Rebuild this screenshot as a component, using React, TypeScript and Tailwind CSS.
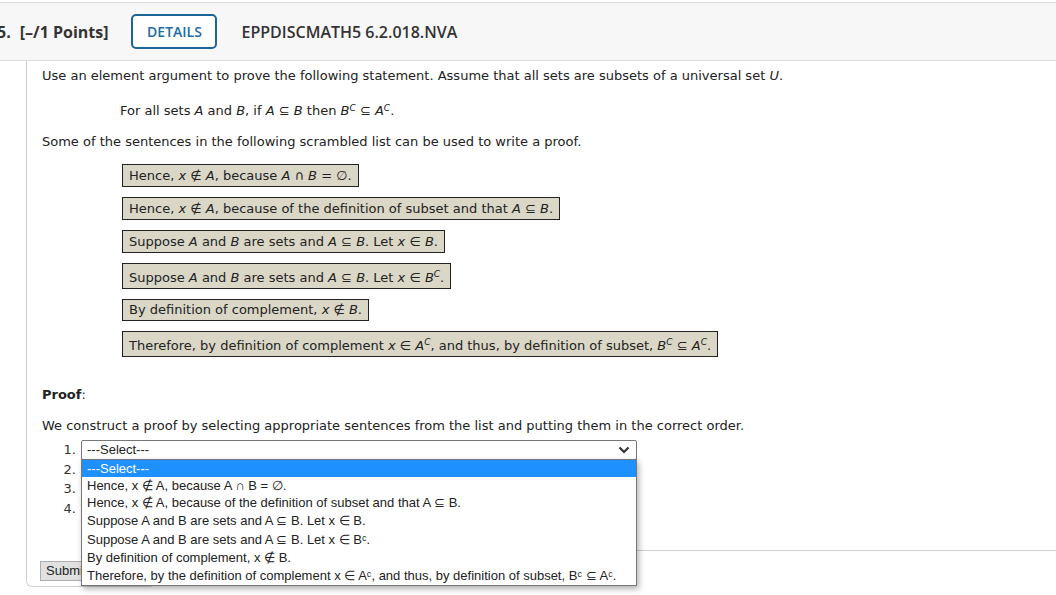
import React from "react";

const body = { fontFamily: '"DejaVu Sans", Verdana, sans-serif' } as const;
const arial = { fontFamily: '"Liberation Sans", Arial, sans-serif' } as const;
const open = { fontFamily: '"Open Sans", sans-serif' } as const;

function V({ children }: { children: React.ReactNode }) {
  return <i className="italic">{children}</i>;
}

function Box({ h, children }: { h: string; children: React.ReactNode }) {
  return (
    <div className="flex">
      <div
        className={`inline-flex items-center border border-[#222] bg-[#dad7c7] px-[6px] text-[13px] text-[#222] ${h}`}
      >
        <span>{children}</span>
      </div>
    </div>
  );
}

const options = [
  { t: "---Select---", h: "h-[17px]", sel: true },
  { t: "Hence, x \u2209 A, because A \u2229 B = \u2205.", h: "h-[17px]" },
  { t: "Hence, x \u2209 A, because of the definition of subset and that A \u2286 B.", h: "h-[17px]" },
  { t: "Suppose A and B are sets and A \u2286 B. Let x \u2208 B.", h: "h-[19px]" },
  { t: "Suppose A and B are sets and A \u2286 B. Let x \u2208 B\u1D9C.", h: "h-[19px]" },
  { t: "By definition of complement, x \u2209 B.", h: "h-[17px]" },
  {
    t: "Therefore, by the definition of complement x \u2208 A\u1D9C, and thus, by definition of subset, B\u1D9C \u2286 A\u1D9C.",
    h: "h-[19px]",
  },
];

export default function App() {
  return (
    <div className="relative h-[595px] w-full overflow-hidden bg-white text-[#222]">
      <div className="h-[2px]" />
      {/* header */}
      <div className="flex h-[59px] items-center border-y border-[#dcdcdc] bg-[#f7f7f7]" style={open}>
        <span className="ml-[-3px] text-[16px] font-bold text-[#333]">5.</span>
        <span className="ml-[9px] text-[16px] font-bold text-[#333]">[–/1 Points]</span>
        <div className="ml-[23px] flex h-[35px] w-[86px] items-center justify-center rounded-[5px] border-2 border-[#1a6699] bg-white text-[14px] font-semibold text-[#1d6ca3]">
          DETAILS
        </div>
        <span className="ml-[24px] text-[16px] font-semibold text-[#333]">EPPDISCMATH5 6.2.018.NVA</span>
      </div>

      {/* body */}
      <div className="ml-[26px] border-l border-[#cfcfcf] pl-[15px] pt-[6px] text-[13px] leading-[18px]" style={body}>
        <p>
          Use an element argument to prove the following statement. Assume that all sets are subsets of a universal
          set <V>U</V>.
        </p>
        <p className="ml-[78px] mt-[17px]">
          For all sets <V>A</V> and <V>B</V>, if <V>A</V> ⊆ <V>B</V> then <V>B</V>
          <sup className="text-[9px]">
            <V>C</V>
          </sup>{" "}
          ⊆ <V>A</V>
          <sup className="text-[9px]">
            <V>C</V>
          </sup>
          .
        </p>
        <p className="mt-[13px]">Some of the sentences in the following scrambled list can be used to write a proof.</p>

        <div className="ml-[80px] mt-[13px] flex flex-col gap-[10px]">
          <Box h="h-[23px]">
            Hence, <V>x</V> ∉ <V>A</V>, because <V>A</V> ∩ <V>B</V> = ∅.
          </Box>
          <Box h="h-[23px]">
            Hence, <V>x</V> ∉ <V>A</V>, because of the definition of subset and that <V>A</V> ⊆ <V>B</V>.
          </Box>
          <Box h="h-[23px]">
            Suppose <V>A</V> and <V>B</V> are sets and <V>A</V> ⊆ <V>B</V>. Let <V>x</V> ∈ <V>B</V>.
          </Box>
          <Box h="h-[26px] pt-[3px]">
            Suppose <V>A</V> and <V>B</V> are sets and <V>A</V> ⊆ <V>B</V>. Let <V>x</V> ∈ <V>B</V>
            <sup className="text-[9px]">
              <V>C</V>
            </sup>
            .
          </Box>
          <Box h="h-[22px]">
            By definition of complement, <V>x</V> ∉ <V>B</V>.
          </Box>
          <Box h="h-[26px] pt-[3px]">
            Therefore, by definition of complement <V>x</V> ∈ <V>A</V>
            <sup className="text-[9px]">
              <V>C</V>
            </sup>
            , and thus, by definition of subset, <V>B</V>
            <sup className="text-[9px]">
              <V>C</V>
            </sup>{" "}
            ⊆ <V>A</V>
            <sup className="text-[9px]">
              <V>C</V>
            </sup>
            .
          </Box>
        </div>

        <p className="mt-[29px]">
          <b className="font-bold">Proof</b>:
        </p>
        <p className="mt-[13px]">
          We construct a proof by selecting appropriate sentences from the list and putting them in the correct order.
        </p>

        <div className="mt-[5px] flex flex-col">
          {[1, 2, 3, 4].map((n) => (
            <div key={n} className={`flex items-center ${n === 1 ? "h-[20px]" : "h-[19.5px]"}`}>
              <span className="w-[34px] text-right text-[#333]">{n}.</span>
              {n === 1 ? (
                <div className="relative ml-[5px]">
                  <div
                    className="flex h-[20px] w-[556px] items-center justify-between rounded-[2px] border border-[#767676] bg-white pl-[5px] pr-[5px] text-[13px] text-[#222]"
                    style={arial}
                  >
                    <span>---Select---</span>
                    <svg width="12" height="8" viewBox="0 0 12 8" className="mr-[1px]">
                      <path d="M1.5 1.5 L6 6 L10.5 1.5" fill="none" stroke="#333" strokeWidth="2.2" />
                    </svg>
                  </div>
                  <div
                    className="absolute left-0 top-[19px] z-10 flex w-[556px] flex-col border border-[#767676] bg-white shadow-[2px_3px_6px_rgba(0,0,0,0.3)]"
                    style={arial}
                  >
                    {options.map((o, i) => (
                      <div
                        key={i}
                        className={`flex items-center whitespace-nowrap pl-[5px] text-[13px] ${o.h} ${
                          o.sel ? "bg-[#1e90ff] text-white" : "text-[#222]"
                        }`}
                      >
                        {o.t}
                      </div>
                    ))}
                  </div>
                </div>
              ) : null}
            </div>
          ))}
        </div>
        <div className="h-[31px]" />
      </div>

      {/* bottom row */}
      <div className="flex">
        <div className="ml-[26px] h-[37px] w-[130px] rounded-b-[6px] border-x border-b border-[#cfcfcf] pl-[13px] pt-[11px]">
          <div
            className="flex h-[20px] w-[110px] items-center border border-[#adadad] bg-[#e1e1e1] pl-[5px] text-[13px] text-[#222]"
            style={arial}
          >
            Submit Answer
          </div>
        </div>
        <div className="flex-1 border-t border-[#cfcfcf]" />
      </div>
    </div>
  );
}
